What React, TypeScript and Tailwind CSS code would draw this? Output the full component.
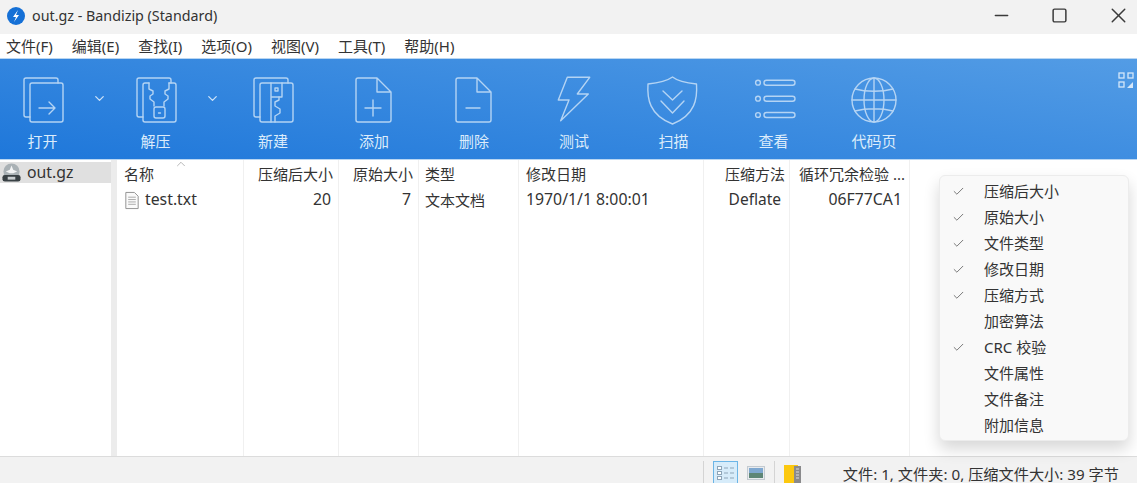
import { Check, ChevronDown, ChevronUp, Minus, Square, X } from "lucide-react";
import type { ReactNode } from "react";

const FONT = "font-['Noto_Sans','Noto_Sans_CJK_SC',sans-serif]";

const MENUS = ["文件(F)", "编辑(E)", "查找(I)", "选项(O)", "视图(V)", "工具(T)", "帮助(H)"];

const COLUMN_MENU = [
  { label: "压缩后大小", checked: true },
  { label: "原始大小", checked: true },
  { label: "文件类型", checked: true },
  { label: "修改日期", checked: true },
  { label: "压缩方式", checked: true },
  { label: "加密算法", checked: false },
  { label: "CRC 校验", checked: true },
  { label: "文件属性", checked: false },
  { label: "文件备注", checked: false },
  { label: "附加信息", checked: false },
];

const COLUMNS = [
  { title: "名称", value: "test.txt", width: "w-[127px]", pad: "pl-[7px]", right: false, valueClass: "text-[15.8px]" },
  { title: "压缩后大小", value: "20", width: "w-[95px]", pad: "pr-[5px]", right: true, valueClass: "mr-[2px] text-[15.8px]" },
  { title: "原始大小", value: "7", width: "w-[80px]", pad: "pr-[5px]", right: true, valueClass: "mr-[2px] text-[15.8px]" },
  { title: "类型", value: "文本文档", width: "w-[100px]", pad: "pl-[6px]", right: false, valueClass: "" },
  { title: "修改日期", value: "1970/1/1 8:00:01", width: "w-[185px]", pad: "pl-[7px]", right: false, valueClass: "text-[15.8px]" },
  { title: "压缩方法", value: "Deflate", width: "w-[86px]", pad: "pr-[4px]", right: true, valueClass: "mr-[4px] text-[15.5px]" },
  { title: "循环冗余检验 ...", value: "06F77CA1", width: "w-[120px]", pad: "pr-[4px]", right: true, valueClass: "mr-[3px] text-[15.8px]" },
];

function IconSvg({ children }: { children: ReactNode }) {
  return (
    <svg
      viewBox="0 0 48 48"
      className="h-[48px] w-[48px] overflow-visible"
      fill="none"
      stroke="#b4d4f4"
      strokeWidth="1.4"
      strokeLinecap="round"
      strokeLinejoin="round"
    >
      {children}
    </svg>
  );
}

const BACK_SHEET = "M11 41H7a2 2 0 0 1-2-2V4a2 2 0 0 1 2-2h30a2 2 0 0 1 2 2v3";
const FRONT_SHEET = "M13 7h29a2 2 0 0 1 2 2v35a2 2 0 0 1-2 2H13a2 2 0 0 1-2-2V9a2 2 0 0 1 2-2z";
const PAGE = "M8 2h19l14 14v28a2 2 0 0 1-2 2H8a2 2 0 0 1-2-2V4a2 2 0 0 1 2-2zM27 2v14h14";

const ICONS: Record<string, ReactNode> = {
  open: (
    <>
      <path d={BACK_SHEET} />
      <path d={FRONT_SHEET} />
      <path d="M20 32h16M30 26l6 6-6 6" />
    </>
  ),
  extract: (
    <>
      <path d={BACK_SHEET} />
      <path d="M17 7h-4a2 2 0 0 0-2 2v35a2 2 0 0 0 2 2h29a2 2 0 0 0 2-2V9a2 2 0 0 0-2-2h-5" />
      <path d="M17 7v6l4 2v3l-3 2v3l4 3v4M37 7v6l-4 2v3l3 2v3l-4 3v4" />
      <rect x="22" y="31" width="11" height="11" rx="2" />
      <path d="M26.5 37h2" />
    </>
  ),
  create: (
    <>
      <path d={BACK_SHEET} />
      <path d={FRONT_SHEET} />
      <path d="M22 7v39M22 21h11V7" />
      <path d="M26 12h3v3h-3z" />
      <path d="M30 21v3l-4 2v4l5 3v4l-5 3v6" />
    </>
  ),
  add: (
    <>
      <path d={PAGE} />
      <path d="M23 24v16M15 32h16" />
    </>
  ),
  remove: (
    <>
      <path d={PAGE} />
      <path d="M16 32h14" />
    </>
  ),
  test: <path d="M17.3 1.3H39.7L27.3 18h11L10.7 44.7 19 24H8.3z" />,
  scan: (
    <>
      <path d="M22.5 1c5 4 14 6 24 7 1 14-1 31-24 40C-1 39-3 22-2 8c10-1 19-3 24.5-7z" />
      <path d="M13 15l9.500 9 9.500-9M11 25l11.500 12L34 25" />
    </>
  ),
  view: (
    <>
      <circle cx="8" cy="6.700" r="2.400" />
      <circle cx="8" cy="22.700" r="2.400" />
      <circle cx="8" cy="39" r="2.400" />
      <rect x="14" y="4.200" width="31" height="5" rx="2.500" />
      <rect x="14" y="20.200" width="31" height="5" rx="2.500" />
      <rect x="14" y="36.500" width="31" height="5" rx="2.500" />
    </>
  ),
  codepage: (
    <>
      <circle cx="24" cy="24" r="22" />
      <ellipse cx="24" cy="24" rx="10" ry="22" />
      <path d="M24 2v44M2 24h44M5 13c11 3 27 3 38 0M5 35c11-3 27-3 38 0" />
    </>
  ),
};

function ToolButton({ label, icon, width }: { label: string; icon: string; width: string }) {
  return (
    <div className={`flex shrink-0 flex-col items-center ${width}`}>
      <div className="mt-[17px] flex h-[48px] items-center justify-center">
        <IconSvg>{ICONS[icon]}</IconSvg>
      </div>
      <span className="mt-[7px] text-[15px] leading-[20px] text-[#dcecfb]">{label}</span>
    </div>
  );
}

function DropArrow() {
  return (
    <div className="flex w-[28px] shrink-0 justify-center pt-[32px]">
      <ChevronDown className="h-[15px] w-[15px] text-[#cfe3f8]" strokeWidth={2} />
    </div>
  );
}

function FileIcon() {
  return (
    <svg viewBox="0 0 16 20" className="mr-[5px] h-[19px] w-[16px] shrink-0" fill="#fafafa" stroke="#8f8f8f">
      <path d="M1.500 1.500h9l4 4v13h-13z" />
      <path d="M4 6.500h8M4 9h8M4 11.500h8M4 14h8" stroke="#a8a8a8" />
    </svg>
  );
}

function ArchiveIcon() {
  return (
    <svg viewBox="0 0 20 20" className="h-[19px] w-[19px] shrink-0">
      <circle cx="10" cy="9" r="8.500" fill="#a9b1b5" />
      <path d="M10 2.500l1.800 4.700 4.200 1.800-4.200 1.800H8.200L4 9l4.200-1.800z" fill="#f2f3f4" />
      <rect x=".5" y="12.500" width="19" height="7" rx="2.500" fill="#394145" />
      <rect x="6" y="14.500" width="8" height="3" fill="#c9ced1" />
    </svg>
  );
}

function ModeIcons() {
  return (
    <div className="flex items-start">
      <div className="mr-[9px] h-[24px] w-px bg-[#d4d4d4]" />
      <div className="flex h-[24px] w-[25px] items-center justify-center border border-[#6cb5e6] bg-[#d7ecfa]">
        <svg viewBox="0 0 20 16" className="h-[16px] w-[20px]" stroke="#8ea5b8" fill="none">
          <rect x="1.500" y="1.500" width="4" height="3" fill="#fff" />
          <rect x="1.500" y="6.500" width="4" height="3" fill="#fff" />
          <rect x="1.500" y="11.500" width="4" height="3" fill="#fff" />
          <path d="M8 3h4M14 3h4M8 8h4M14 8h4M8 13h4M14 13h4" />
        </svg>
      </div>
      <div className="ml-[9px] flex h-[24px] w-[18px] items-center justify-center">
        <svg viewBox="0 0 18 14" className="h-[14px] w-[18px]">
          <rect x=".5" y=".5" width="17" height="13" fill="#e8ebee" stroke="#c3cad0" />
          <rect x="2" y="2" width="14" height="5" fill="#7fa8d0" />
          <rect x="2" y="7" width="14" height="5" fill="#5e8676" />
        </svg>
      </div>
      <div className="ml-[9px] mr-[9px] h-[24px] w-px bg-[#d4d4d4]" />
      <svg viewBox="0 0 20 24" className="mt-[4px] h-[24px] w-[20px]">
        <path d="M0 0h14v24H0z" fill="#fcc80e" />
        <path d="M14 2h3v16l3 3v3h-6z" fill="#e9b33d" />
        <rect x="10" y="1" width="7" height="17" fill="#8a8a8c" />
        <path d="M12 4h3M12 7h3M12 10h3M12 13h3" stroke="#dcdcdc" />
      </svg>
    </div>
  );
}

function ColumnMenu() {
  return (
    <div className="absolute left-[939px] top-[175px] z-10 w-[190px] rounded-[6px] border border-[#ececec] bg-[#f9f9f9] py-[2px] shadow-[0_8px_16px_rgba(0,0,0,0.16)]">
      {COLUMN_MENU.map((item) => (
        <div key={item.label} className="flex h-[26px] items-center text-[15px] text-[#333]">
          <span className="flex w-[44px] pl-[12px]">
            {item.checked && <Check className="h-[13px] w-[13px] text-[#666]" strokeWidth={1.6} />}
          </span>
          {item.label}
        </div>
      ))}
    </div>
  );
}

export default function App() {
  return (
    <div className={`relative flex h-[483px] w-[1137px] flex-col overflow-hidden bg-white ${FONT}`}>
      <div className="flex h-[34px] shrink-0 items-center bg-[#f2f2f2] pb-[3px] pl-[7px] text-[14.3px] text-[#333]">
        <svg viewBox="0 0 18 18" className="mr-[7px] h-[18px] w-[18px]">
          <circle cx="9" cy="9" r="9" fill="#1570d6" />
          <path d="M11 3L6 10h3l-2 5 5-7H9z" fill="#fff" />
        </svg>
        out.gz - Bandizip (Standard)
        <div className="ml-auto flex items-center pr-[6px] text-[#3a3a3a]">
          <Minus className="h-[21px] w-[21px]" strokeWidth={1.7} />
          <Square className="ml-[39px] h-[17px] w-[17px]" strokeWidth={2.1} />
          <X className="ml-[38px] h-[25px] w-[25px]" strokeWidth={1.4} />
        </div>
      </div>

      <div className="flex h-[24px] shrink-0 items-center gap-[19px] pl-[6px] text-[15px] text-[#333]">
        {MENUS.map((menu) => (
          <span key={menu}>{menu}</span>
        ))}
      </div>

      <div className="relative flex h-[102px] shrink-0 border-y border-[#b9d6f2] bg-[linear-gradient(188deg,#539ce5,#1e77da)]">
        <ToolButton label="打开" icon="open" width="w-[85px]" />
        <DropArrow />
        <ToolButton label="解压" icon="extract" width="w-[85px]" />
        <DropArrow />
        <ToolButton label="新建" icon="create" width="w-[94px]" />
        <div className="w-[4px] shrink-0" />
        <ToolButton label="添加" icon="add" width="w-[100px]" />
        <ToolButton label="删除" icon="remove" width="w-[100px]" />
        <ToolButton label="测试" icon="test" width="w-[100px]" />
        <ToolButton label="扫描" icon="scan" width="w-[99px]" />
        <ToolButton label="查看" icon="view" width="w-[101px]" />
        <ToolButton label="代码页" icon="codepage" width="w-[100px]" />
        <svg viewBox="0 0 16 16" className="ml-[194px] mt-[13px] h-[16px] w-[16px]" fill="none" stroke="#d5e7f9" strokeWidth="1.300">
          <rect x="1" y="1" width="5" height="5" />
          <rect x="10" y="1" width="5" height="5" />
          <rect x="1" y="10" width="5" height="5" />
          <path d="M15 10v6H9z" fill="#d5e7f9" stroke="none" />
        </svg>
      </div>

      <div className="flex min-h-0 flex-1 text-[15px] text-[#333]">
        <div className="w-[111px] shrink-0 pt-[2px]">
          <div className="flex h-[21px] items-center gap-[6px] bg-[#e0e0e0] pl-[2px] text-[15.8px]">
            <ArchiveIcon />
            out.gz
          </div>
        </div>
        <div className="w-[6px] shrink-0 bg-[#ececec]" />
        <div className="relative flex">
          {COLUMNS.map((col) => (
            <div key={col.title} className={`shrink-0 border-r border-[#f0f0f0] ${col.width} ${col.pad}`}>
              <div className="flex h-[24px] items-end whitespace-nowrap leading-[20px]">
                <span className={col.right ? "ml-auto" : ""}>{col.title}</span>
              </div>
              <div className="mt-[4px] flex h-[24px] items-center whitespace-nowrap">
                {col.title === "名称" && <FileIcon />}
                <span className={`${col.right ? "ml-auto" : ""} ${col.valueClass}`}>{col.value}</span>
              </div>
            </div>
          ))}
          <ChevronUp className="absolute left-[57px] top-[-3px] h-[14px] w-[14px] text-[#999]" strokeWidth={1.2} />
        </div>
      </div>

      <div className="flex h-[27px] shrink-0 items-start overflow-hidden border-t border-[#dcdcdc] bg-[#f2f2f2] pl-[703px] pt-[4px] text-[15.2px] text-[#333]">
        <ModeIcons />
        <span className="ml-auto pr-[18px] pt-[3px] leading-[20px]">文件: 1, 文件夹: 0, 压缩文件大小: 39 字节</span>
      </div>

      <ColumnMenu />
    </div>
  );
}
